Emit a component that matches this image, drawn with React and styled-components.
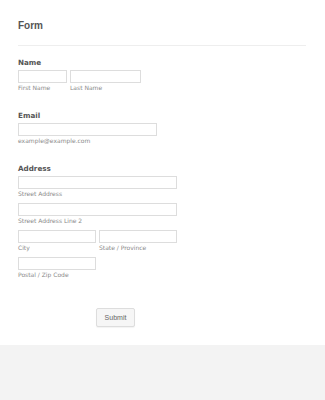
import React from "react";
import styled, { createGlobalStyle } from "styled-components";

const GlobalStyle = createGlobalStyle`
  html, body {
    margin: 0;
    padding: 0;
    background: #f3f3f3;
  }
  * {
    box-sizing: border-box;
  }
`;

const App = () => {
  return (
    <>
      <GlobalStyle />
      <StCard>
        <StHeader>
          <StTitle>Form</StTitle>
        </StHeader>

        <StField>
          <StLabel>Name</StLabel>
          <StRow>
            <StSub>
              <StInput $w={49} />
              <StHint>First Name</StHint>
            </StSub>
            <StSub>
              <StInput $w={71} />
              <StHint>Last Name</StHint>
            </StSub>
          </StRow>
        </StField>

        <StField>
          <StLabel>Email</StLabel>
          <StSub>
            <StInput $w={139} />
            <StHint>example@example.com</StHint>
          </StSub>
        </StField>

        <StField>
          <StLabel>Address</StLabel>
          <StStack>
            <StSub>
              <StInput $w={159} />
              <StHint>Street Address</StHint>
            </StSub>
            <StSub>
              <StInput $w={159} />
              <StHint>Street Address Line 2</StHint>
            </StSub>
            <StRow>
              <StSub>
                <StInput $w={78} />
                <StHint>City</StHint>
              </StSub>
              <StSub>
                <StInput $w={78} />
                <StHint>State / Province</StHint>
              </StSub>
            </StRow>
            <StSub>
              <StInput $w={78} />
              <StHint>Postal / Zip Code</StHint>
            </StSub>
          </StStack>
        </StField>

        <StActions>
          <StButton type="button">Submit</StButton>
        </StActions>
      </StCard>
    </>
  );
};

export default App;

const StCard = styled.div`
  display: flex;
  flex-direction: column;
  height: 345px;
  padding: 20px 18px 0 18px;
  background: #ffffff;
  box-shadow: 0 2px 5px rgba(0, 0, 0, 0.1);
`;

const StHeader = styled.div`
  width: 288px;
  padding-bottom: 13px;
  border-bottom: 1px solid #eeeeee;
  margin-bottom: 12px;
`;

const StTitle = styled.div`
  font-family: "Liberation Sans", Arial, sans-serif;
  font-size: 10px;
  line-height: 12px;
  font-weight: bold;
  color: #555555;
`;

const StField = styled.div`
  display: flex;
  flex-direction: column;
  margin-bottom: 19px;
`;

const StLabel = styled.div`
  font-family: "DejaVu Sans", Verdana, sans-serif;
  font-size: 7.2px;
  line-height: 9px;
  font-weight: bold;
  color: #555555;
  margin-bottom: 3px;
`;

const StRow = styled.div`
  display: flex;
  gap: 3px;
`;

const StStack = styled.div`
  display: flex;
  flex-direction: column;
  gap: 5px;
`;

const StSub = styled.div`
  display: flex;
  flex-direction: column;
`;

const StInput = styled.div`
  width: ${(p) => p.$w}px;
  height: 13px;
  border: 1px solid #dddddd;
  background: #ffffff;
`;

const StHint = styled.div`
  margin-top: 1px;
  font-family: "DejaVu Sans", Verdana, sans-serif;
  font-size: 6px;
  line-height: 8px;
  color: #8a8a8a;
`;

const StActions = styled.div`
  display: flex;
  padding-left: 78px;
  margin-top: 10px;
`;

const StButton = styled.button`
  width: 39px;
  height: 19px;
  padding: 0;
  border: 1px solid #dddddd;
  border-radius: 2px;
  background: #f6f6f6;
  box-shadow: 0 1px 1px rgba(0, 0, 0, 0.05);
  font-family: "Liberation Sans", Arial, sans-serif;
  font-size: 7px;
  color: #666666;
  cursor: pointer;
`;
